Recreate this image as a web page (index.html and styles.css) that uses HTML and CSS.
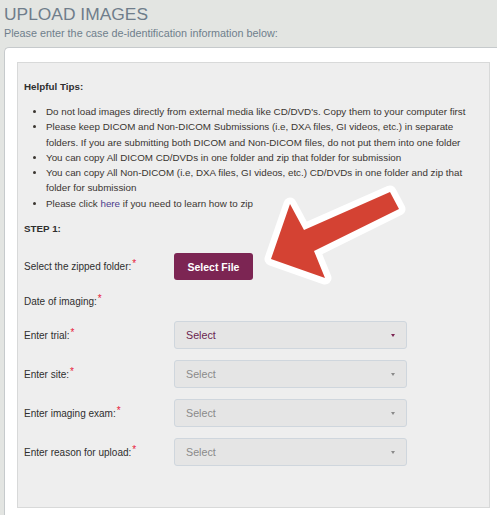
FILE: index.html
```html
<!DOCTYPE html>
<html>
<head>
<meta charset="utf-8">
<link rel="stylesheet" href="styles.css">
</head>
<body>
<div class="page">
  <h1 class="title">UPLOAD IMAGES</h1>
  <p class="subtitle">Please enter the case de-identification information below:</p>
  <div class="card">
    <div class="panel">
      <div class="tips-head">Helpful Tips:</div>
      <ul class="tips">
        <li>Do not load images directly from external media like CD/DVD's. Copy them to your computer first</li>
        <li>Please keep DICOM and Non-DICOM Submissions (i.e, DXA files, GI videos, etc.) in separate folders. If you are submitting both DICOM and Non-DICOM files, do not put them into one folder</li>
        <li>You can copy All DICOM CD/DVDs in one folder and zip that folder for submission</li>
        <li>You can copy All Non-DICOM (i.e, DXA files, GI videos, etc.) CD/DVDs in one folder and zip that folder for submission</li>
        <li>Please click <a class="link" href="#">here</a> if you need to learn how to zip</li>
      </ul>
      <div class="step">STEP 1:</div>
      <div class="row row-btn">
        <label class="lbl">Select the zipped folder:<span class="req">*</span></label>
        <button class="btn">Select File</button>
      </div>
      <div class="row row-date">
        <label class="lbl">Date of imaging:<span class="req">*</span></label>
      </div>
      <div class="row row-sel first">
        <label class="lbl">Enter trial:<span class="req">*</span></label>
        <div class="select active"><span>Select</span><i class="caret"></i></div>
      </div>
      <div class="row row-sel">
        <label class="lbl">Enter site:<span class="req">*</span></label>
        <div class="select"><span>Select</span><i class="caret"></i></div>
      </div>
      <div class="row row-sel">
        <label class="lbl">Enter imaging exam:<span class="req">*</span></label>
        <div class="select"><span>Select</span><i class="caret"></i></div>
      </div>
      <div class="row row-sel">
        <label class="lbl">Enter reason for upload:<span class="req">*</span></label>
        <div class="select"><span>Select</span><i class="caret"></i></div>
      </div>
    </div>
  </div>
</div>
<svg class="arrow" width="497" height="515" viewBox="0 0 497 515">
  <polygon points="271,259 290,204 304,230 390,192 399,209 314,251 325,278" fill="#d44233" stroke="#ffffff" stroke-width="13" stroke-linejoin="round" paint-order="stroke"/>
</svg>
</body>
</html>
```
FILE: styles.css
```css
html, body {
  margin: 0;
  padding: 0;
}
body {
  background: #e3e5e2;
  font-family: "Liberation Sans", Arial, sans-serif;
  width: 497px;
  height: 515px;
  overflow: hidden;
  position: relative;
}
.page {
  padding: 0 0 0 4px;
}
.title {
  margin: 0;
  padding-top: 3px;
  font-size: 17.4px;
  font-weight: normal;
  line-height: 22px;
  color: #6f7d8b;
}
.subtitle {
  margin: 1px 0 0 0;
  font-size: 10.8px;
  line-height: 15px;
  color: #6f7f8c;
}
.card {
  margin-top: 6px;
  width: 493px;
  height: 480px;
  background: #ffffff;
  border: 1px solid #c6cacc;
  border-right: none;
  border-top-left-radius: 5px;
  box-sizing: border-box;
  padding: 14px 0 0 12px;
}
.panel {
  width: 473px;
  height: 446px;
  box-sizing: border-box;
  background: #eeeeee;
  border: 1px solid #d8d9d9;
  padding: 16px 0 0 6px;
  font-size: 10px;
  color: #333333;
}
.tips-head, .step {
  font-size: 9.8px;
  font-weight: bold;
  line-height: 15px;
  color: #2e2e2e;
}
.tips {
  margin: 10px 0 0 0;
  padding: 0 8px 0 22px;
  font-size: 9.8px;
  line-height: 15.3px;
  color: #3a3530;
}
.link {
  color: #4b3c8c;
  text-decoration: none;
}
.step {
  margin-top: 10px;
}
.row {
  display: flex;
  align-items: center;
}
.lbl {
  width: 150px;
  line-height: 15px;
  color: #2e2e2e;
}
.req {
  color: #e8203a;
  position: relative;
  top: -3px;
  margin-left: 1px;
}
.row-btn {
  margin-top: 17px;
  height: 27px;
}
.btn {
  width: 79px;
  height: 27px;
  border: none;
  border-radius: 3px;
  background: #7c2553;
  color: #ffffff;
  font-family: "Liberation Sans", Arial, sans-serif;
  font-weight: bold;
  font-size: 10.5px;
  padding: 0;
}
.row-date {
  margin-top: 14px;
}
.row-sel {
  margin-top: 11px;
}
.row-sel.first {
  margin-top: 12px;
}
.select {
  width: 233px;
  height: 28px;
  box-sizing: border-box;
  border: 1px solid #cfd6dd;
  border-radius: 3px;
  background: #e5e5e5;
  display: flex;
  align-items: center;
  justify-content: space-between;
  padding: 0 11px 0 11px;
  font-size: 10.7px;
  color: #8a8a8a;
}
.caret {
  width: 0;
  height: 0;
  border-left: 2.5px solid transparent;
  border-right: 2.5px solid transparent;
  border-top: 3px solid #8a8a8a;
}
.select.active {
  color: #6b1f50;
}
.select.active .caret {
  border-top-color: #7c2553;
}
.arrow {
  position: absolute;
  left: 0;
  top: 0;
  pointer-events: none;
}
```
